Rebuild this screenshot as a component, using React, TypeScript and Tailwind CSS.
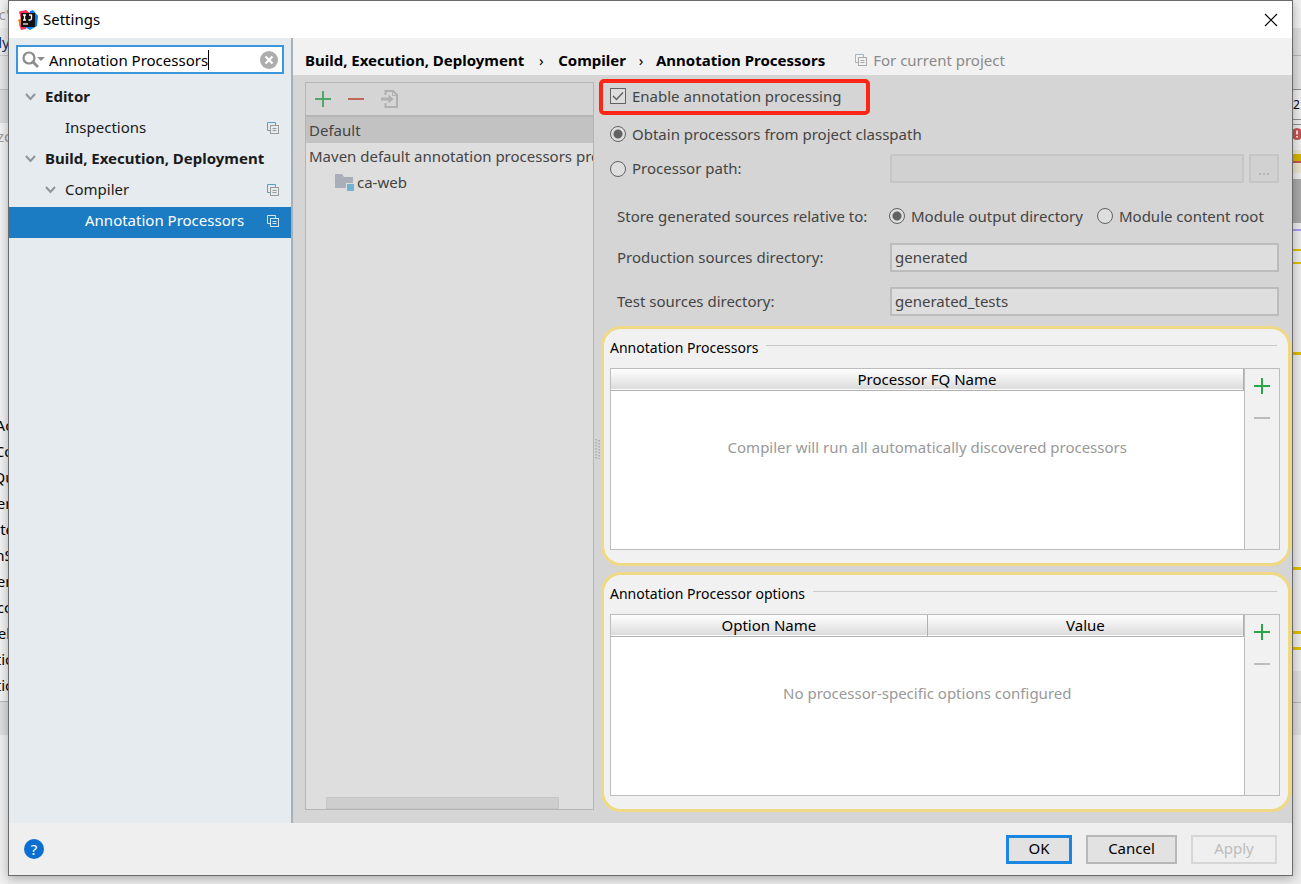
import React, { useState } from "react";

const GUTTER_WORDS = ["Ac", "Co", "Qu", "er", "rte", "nS", "er", "cc", "el", "tic", "tic"];

// Error stripe of the editor behind the dialog: [height class, colour class]
const STRIPE = [
  ["h-[28px]", "bg-[#f0f0f0]"],
  ["h-[27px]", "bg-[#dedede]"],
  ["h-[1px]", "bg-[#b5b5b5]"],
  ["h-[33px]", "bg-[#dedede]"],
  ["h-[1px]", "bg-[#8f8f8f]"],
];

const STRIPE_LOWER = [
  ["h-[4px]", "bg-[#e9e2cc]"],
  ["h-[7px]", "bg-[#d3b300]"],
  ["h-[2px]", "bg-[#c25450]"],
  ["h-[10px]", "bg-[#e9e2cc]"],
  ["h-[6px]", "bg-[#ebebeb]"],
  ["h-[44px]", "bg-[#a8a8a8]"],
  ["h-[6px]", "bg-[#ebebeb]"],
  ["h-[2px]", "bg-[#a897ee]"],
  ["h-[18px]", "bg-[#ebebeb]"],
  ["h-[2px]", "bg-[#dcbb00]"],
  ["h-[11px]", "bg-[#ebebeb]"],
  ["h-[2px]", "bg-[#dcbb00]"],
  ["h-[88px]", "bg-[#ebebeb]"],
  ["h-[3px]", "bg-[#dcbb00]"],
  ["h-[212px]", "bg-[#ebebeb]"],
  ["h-[3px]", "bg-[#dcbb00]"],
  ["h-[61px]", "bg-[#ebebeb]"],
  ["h-[3px]", "bg-[#dcbb00]"],
  ["h-[13px]", "bg-[#ebebeb]"],
  ["h-[3px]", "bg-[#dcbb00]"],
  ["h-[21px]", "bg-[#ebebeb]"],
  ["h-[31px]", "bg-[#dedede]"],
  ["h-[1px]", "bg-[#b5b5b5]"],
  ["h-[32px]", "bg-[#dedede]"],
];

function IdeaLogo() {
  return (
    <svg width="20" height="20" viewBox="0 0 20 20" aria-hidden="true">
      <path d="M1 1.500 L8 0 L13 4 L8 19 L3 20 L1 14 L3 10 Z" fill="#fe315d" />
      <path d="M0 10 L4 8 L5 15 L2 15 Z" fill="#f97a12" />
      <path d="M12 1 L15 0 L20 6 L19 16 L12 20 L7 17 Z" fill="#087cfa" />
      <rect x="3" y="3" width="14" height="14" fill="#111" />
      <path d="M5 5h3M6.500 5v5M5 10h3M11 5h2.500v3.500q0 1.500-1.500 1.500h-1.500" fill="none" stroke="#fff" strokeWidth="1.300" />
      <path d="M5 14h5" stroke="#fff" strokeWidth="1.200" />
    </svg>
  );
}

function CopyIcon({ back = "#5b9dc0", front = "#9a9a9a" }: { back?: string; front?: string }) {
  return (
    <svg width="12" height="12" viewBox="0 0 12 12" fill="none" aria-hidden="true" className="shrink-0">
      <path d="M3 8.500H0.500V0.500H8.500V3" stroke={back} />
      <rect x="3.500" y="3.500" width="8" height="8" stroke={front} />
      <path d="M5.500 6.500h4M5.500 8.500h4" stroke={front} />
    </svg>
  );
}

function Chevron() {
  return (
    <svg width="12" height="8" viewBox="0 0 12 8" fill="none" aria-hidden="true" className="shrink-0">
      <path d="M1 1L5.500 6L10 1" stroke="#8f959a" strokeWidth="2" />
    </svg>
  );
}

function PlusIcon({ color = "#2aa64a" }: { color?: string }) {
  return (
    <svg width="16" height="16" viewBox="0 0 16 16" aria-hidden="true">
      <path d="M8 0v16M0 8h16" stroke={color} strokeWidth="2" />
    </svg>
  );
}

function MinusIcon({ color = "#bcbcbc" }: { color?: string }) {
  return (
    <svg width="16" height="16" viewBox="0 0 16 16" aria-hidden="true">
      <path d="M0 8h16" stroke={color} strokeWidth="2" />
    </svg>
  );
}

type RadioProps = { name: string; label: string; defaultChecked?: boolean };

function Radio({ name, label, defaultChecked }: RadioProps) {
  return (
    <label className="flex items-center gap-[6px] whitespace-nowrap">
      <input
        type="radio"
        name={name}
        defaultChecked={defaultChecked}
        className="size-4 shrink-0 appearance-none rounded-full border border-[#626262] bg-[#dedede] checked:bg-[radial-gradient(circle,#626262_0_4px,#dedede_5px)]"
      />
      <span className="pb-px">{label}</span>
    </label>
  );
}

type TreeRowProps = {
  label: string;
  indent: string;
  bold?: boolean;
  expandable?: boolean;
  project?: boolean;
  selected?: boolean;
};

function TreeRow({ label, indent, bold, expandable, project, selected }: TreeRowProps) {
  return (
    <li
      className={`flex h-[31px] items-center pr-3 pb-1 ${indent} ${bold ? "font-bold" : ""} ${
        selected ? "bg-[#1b7cc4] text-white" : "text-[#1a1a1a]"
      }`}
    >
      <span className="flex w-5 shrink-0">{expandable && <Chevron />}</span>
      <span className="flex-1 pb-px whitespace-nowrap">{label}</span>
      {project && (selected ? <CopyIcon back="#d5e6f3" front="#d5e6f3" /> : <CopyIcon />)}
    </li>
  );
}

type PanelProps = { title: string; columns: string[]; empty: string };

function TablePanel({ title, columns, empty }: PanelProps) {
  return (
    <section className="flex flex-1 flex-col rounded-[20px] border-[3px] border-[#efd985] bg-[#f1f1f1] pt-2 pr-2 pb-[13px] pl-[6px]">
      <div className="flex h-[22px] items-center gap-2 pr-[3px]">
        <h2 className="text-[14px] whitespace-nowrap">{title}</h2>
        <div className="mb-[5px] h-px flex-1 bg-[#c9c9c9]" />
      </div>
      <div className="mt-[9px] flex flex-1 border border-[#bdbdbd]">
        <div className="flex-1 bg-white">
          <table className="w-full table-fixed border-collapse">
            <thead>
              <tr className="h-[21px] border-b border-[#b0b0b0] bg-linear-to-b from-white to-[#dcdcdc]">
                {columns.map((column) => (
                  <th key={column} className="border-r border-[#b0b0b0] p-0 leading-5 font-normal">
                    {column}
                  </th>
                ))}
              </tr>
            </thead>
            <tbody>
              <tr>
                <td colSpan={columns.length} className="pt-[46px] text-center text-[#999]">
                  {empty}
                </td>
              </tr>
            </tbody>
          </table>
        </div>
        <div className="flex w-[35px] flex-col items-center gap-4 border-l border-[#bdbdbd] pt-[9px]">
          <button type="button" aria-label="Add">
            <PlusIcon />
          </button>
          <button type="button" aria-label="Remove" disabled>
            <MinusIcon />
          </button>
        </div>
      </div>
    </section>
  );
}

function Sidebar() {
  const [query, setQuery] = useState("Annotation Processors");

  return (
    <aside className="w-[284px] shrink-0 border-r-2 border-[#a9b0b6] bg-[#e5ebef]">
      <div className="mx-[7px] mt-[7px] flex h-[29px] items-center border-2 border-[#3b97dc] bg-white px-1">
        <svg width="24" height="18" viewBox="0 0 24 18" fill="none" aria-hidden="true" className="shrink-0">
          <circle cx="7" cy="7" r="5.500" stroke="#8c8c8c" strokeWidth="2.200" />
          <path d="M11 11l5 5" stroke="#8c8c8c" strokeWidth="2.600" />
          <path d="M15 6h8l-4 4z" fill="#8c8c8c" />
        </svg>
        <div className="flex min-w-0 flex-1 items-center pl-[3px]">
          <input
            aria-label="Search settings"
            value={query}
            onChange={(e) => setQuery(e.target.value)}
            className="field-sizing-content min-w-0 bg-transparent outline-none"
          />
          <span className="h-5 w-px bg-black" />
        </div>
        <button type="button" aria-label="Clear search" onClick={() => setQuery("")} className="shrink-0">
          <svg width="18" height="18" viewBox="0 0 18 18" aria-hidden="true">
            <circle cx="9" cy="9" r="9" fill="#adadad" />
            <path d="M5.500 5.500l7 7M12.500 5.500l-7 7" stroke="#fff" strokeWidth="2.200" />
          </svg>
        </button>
      </div>
      <ul className="mt-[9px]">
        <TreeRow label="Editor" indent="pl-4" bold expandable />
        <TreeRow label="Inspections" indent="pl-9" project />
        <TreeRow label="Build, Execution, Deployment" indent="pl-4" bold expandable />
        <TreeRow label="Compiler" indent="pl-9" expandable project />
        <TreeRow label="Annotation Processors" indent="pl-14" project selected />
      </ul>
    </aside>
  );
}

function ProfileList() {
  return (
    <div className="mt-[7px] mb-[13px] flex w-[289px] shrink-0 flex-col overflow-hidden border border-[#b5b5b5] bg-[#dedede] text-[#444]">
      <div className="flex h-[34px] items-center gap-[17px] border-b-2 border-[#b5b5b5] bg-[#d5d5d5] pl-[9px]">
        <button type="button" aria-label="Add profile">
          <PlusIcon color="#4fa86a" />
        </button>
        <button type="button" aria-label="Remove profile">
          <MinusIcon color="#c4655c" />
        </button>
        <button type="button" aria-label="Move to profile" disabled>
          <svg width="18" height="18" viewBox="0 0 18 18" fill="none" aria-hidden="true">
            <path d="M4.500 5V1H12L16 5V17H4.500V13" stroke="#b0b0b0" strokeWidth="2" />
            <path d="M11.500 1.500V5.500H16" stroke="#b0b0b0" />
            <path d="M0 9h9" stroke="#b0b0b0" strokeWidth="3" />
            <path d="M7.500 4.500L12.500 9L7.500 13.500z" fill="#b0b0b0" />
          </svg>
        </button>
      </div>
      <ul className="flex-1 leading-[26px] whitespace-nowrap">
        <li className="bg-[#c2c2c2] pl-[3px]">Default</li>
        <li className="pl-[3px]">Maven default annotation processors profile</li>
        <li className="flex items-center gap-[3px] pl-7">
          <svg width="20" height="18" viewBox="0 0 20 18" aria-hidden="true">
            <path d="M1 1h7l2 3h9v11H1z" fill="#a9aeb8" />
            <rect x="12" y="10" width="8" height="8" fill="#dedede" />
            <rect x="13" y="11" width="7" height="7" fill="#6fb3cf" />
          </svg>
          ca-web
        </li>
      </ul>
      <div className="mr-[34px] ml-5 h-3 border border-[#c6c6c6] bg-[#cecece]" />
    </div>
  );
}

function ProcessorSettings() {
  const field =
    "h-[29px] min-w-0 flex-1 border-2 border-[#bcbcbc] bg-[#dedede] px-[3px] pb-[2px] text-[#444] outline-none";

  return (
    <div className="flex min-w-0 flex-1 flex-col pr-px pb-[11px] text-[#444]">
      <label className="mt-1 mr-auto ml-[-2px] flex h-9 w-[271px] items-center gap-[6px] rounded-[5px] border-4 border-[#fb2616] pb-[2px] pl-[7px] whitespace-nowrap">
        <span className="relative flex">
          <input
            type="checkbox"
            defaultChecked
            className="peer size-4 appearance-none border border-[#626262] bg-[#dedede]"
          />
          <svg
            width="16"
            height="16"
            viewBox="0 0 16 16"
            fill="none"
            aria-hidden="true"
            className="pointer-events-none absolute inset-0 hidden peer-checked:block"
          >
            <path d="M3 8l3.500 3.500L13 4.500" stroke="#626262" strokeWidth="1.500" />
          </svg>
        </span>
        <span className="pb-px">Enable annotation processing</span>
      </label>

      <div className="flex flex-col pr-3 pl-[9px]">
        <div className="mt-1 flex h-[30px] items-center">
          <Radio name="source" label="Obtain processors from project classpath" defaultChecked />
        </div>
        <div className="mt-[5px] flex h-[29px] items-center">
          <div className="w-[280px] shrink-0">
            <Radio name="source" label="Processor path:" />
          </div>
          <input
            aria-label="Processor path"
            disabled
            className="h-[29px] min-w-0 flex-1 border-2 border-[#c6c6c6] bg-[#d1d1d1]"
          />
          <button
            type="button"
            disabled
            aria-label="Browse"
            className="ml-[5px] h-[29px] w-[30px] shrink-0 border-2 border-[#c6c6c6] bg-[#d1d1d1] text-[#b0b0b0]"
          >
            ...
          </button>
        </div>
        <div className="mt-[18px] flex h-[30px] items-center pl-[7px]">
          <span className="w-[272px] shrink-0">Store generated sources relative to:</span>
          <div className="flex gap-[14px]">
            <Radio name="relative" label="Module output directory" defaultChecked />
            <Radio name="relative" label="Module content root" />
          </div>
        </div>
        <div className="mt-3 flex items-center pl-[7px]">
          <label htmlFor="production-dir" className="w-[273px] shrink-0 pb-[2px]">
            Production sources directory:
          </label>
          <input id="production-dir" defaultValue="generated" className={field} />
        </div>
        <div className="mt-[15px] flex items-center pl-[7px]">
          <label htmlFor="test-dir" className="w-[273px] shrink-0 pb-[2px]">
            Test sources directory:
          </label>
          <input id="test-dir" defaultValue="generated_tests" className={field} />
        </div>
      </div>

      <div className="mt-[10px] flex flex-1 flex-col gap-[6px] text-black">
        <TablePanel
          title="Annotation Processors"
          columns={["Processor FQ Name"]}
          empty="Compiler will run all automatically discovered processors"
        />
        <TablePanel
          title="Annotation Processor options"
          columns={["Option Name", "Value"]}
          empty="No processor-specific options configured"
        />
      </div>
    </div>
  );
}

export default function App() {
  return (
    <div className="flex min-h-screen bg-[#ececec] font-['Noto_Sans','Noto_Sans_CJK_SC',sans-serif] text-[15px] leading-5 text-black">
      {/* Editor window behind the dialog, left edge */}
      <div className="flex w-2 shrink-0 flex-col overflow-hidden bg-[#f2f2f2]" aria-hidden="true">
        <div className="flex h-[28px] items-center justify-center text-[#999]">c'</div>
        <div className="flex h-[28px] items-center justify-center border-b border-[#c9c9c9] bg-[#ebebeb] text-[#12306b]">ly</div>
        <div className="h-[34px] border-b border-[#c0c0c0] bg-[#e6e6e6]" />
        <div className="h-[33px] bg-[#dcdcdc]" />
        <div className="flex h-[26px] items-center justify-center text-[#999]">zc</div>
        <div className="mt-[263px] flex-1">
          {GUTTER_WORDS.map((word, i) => (
            <div key={i} className="flex h-[26px] items-center justify-center">
              {word}
            </div>
          ))}
        </div>
        <div className="h-[34px] border-t border-[#b5b5b5] bg-[#dedede]" />
        <div className="h-[149px] bg-[#f0f0f0]" />
      </div>

      <main className="z-10 mb-2 flex min-w-0 flex-1 flex-col border border-[#6b6b6b] bg-[#efefef] shadow-[0_2px_10px_rgba(0,0,0,0.3)]">
        <header className="flex h-[37px] items-center gap-[5px] bg-white pr-[14px] pl-[9px]">
          <IdeaLogo />
          <h1 className="flex-1 pb-[2px]">Settings</h1>
          <button type="button" aria-label="Close">
            <svg width="14" height="14" viewBox="0 0 14 14" aria-hidden="true">
              <path d="M1 1l12 12M13 1L1 13" stroke="#000" strokeWidth="1.200" />
            </svg>
          </button>
        </header>

        <div className="flex flex-1">
          <Sidebar />
          <div className="flex min-w-0 flex-1 flex-col">
            <nav className="flex h-[37px] items-center bg-[#f1f1f1] pt-[6px] pl-3 font-bold whitespace-nowrap">
              <span>Build, Execution, Deployment</span>
              <span className="w-[34px] text-center font-normal">›</span>
              <span>Compiler</span>
              <span className="w-[30px] text-center font-normal">›</span>
              <span>Annotation Processors</span>
              <span className="ml-[30px] flex items-center gap-[6px] font-normal text-[#8a8a8a]">
                <CopyIcon back="#9fb8c6" front="#a8a8a8" />
                For current project
              </span>
            </nav>
            <div className="flex flex-1 bg-[#d5d5d5] pl-3">
              <ProfileList />
              <div className="flex w-[7px] shrink-0 items-center justify-center">
                <svg width="5" height="20" viewBox="0 0 5 20" aria-hidden="true">
                  <path d="M1 0v20M4 1v19" stroke="#a8a8a8" strokeWidth="1.500" strokeDasharray="1.500 1.500" />
                </svg>
              </div>
              <ProcessorSettings />
            </div>
          </div>
        </div>

        <footer className="flex h-[52px] items-center pr-[15px] pl-[15px]">
          <button
            type="button"
            aria-label="Help"
            className="mr-auto size-5 rounded-full bg-[#0b6fd1] leading-5 text-white"
          >
            ?
          </button>
          <div className="flex gap-[14px]">
            <button type="button" className="h-[29px] w-[66px] border-[3px] border-[#1a86e0] bg-[#e2e2e2] pb-[2px]">
              OK
            </button>
            <button type="button" className="h-[29px] w-[91px] border-2 border-[#b8b8b8] bg-[#e2e2e2] pb-[2px]">
              Cancel
            </button>
            <button type="button" disabled className="h-[29px] w-[86px] border-2 border-[#d6d6d6] pb-[2px] text-[#bdbdbd]">
              Apply
            </button>
          </div>
        </footer>
      </main>

      {/* Editor window behind the dialog, right edge */}
      <div className="flex w-2 shrink-0 flex-col overflow-hidden bg-[#ececec]" aria-hidden="true">
        {STRIPE.map(([height, color], i) => (
          <div key={i} className={`shrink-0 ${height} ${color}`} />
        ))}
        <div className="flex h-[30px] shrink-0 items-center border-b border-[#8f8f8f] bg-[#ececec] text-[12px]">2</div>
        <div className="h-[5px] shrink-0 border-b border-[#8f8f8f]" />
        <div className="flex h-[25px] shrink-0 items-center justify-center pb-2">
          <svg width="12" height="12" viewBox="0 0 12 12" className="shrink-0">
            <circle cx="6" cy="6" r="6" fill="#c25450" />
            <path d="M6 2.500v4M6 8v1.500" stroke="#fff" strokeWidth="1.600" />
          </svg>
        </div>
        {STRIPE_LOWER.map(([height, color], i) => (
          <div key={i} className={`shrink-0 ${height} ${color}`} />
        ))}
      </div>
    </div>
  );
}
